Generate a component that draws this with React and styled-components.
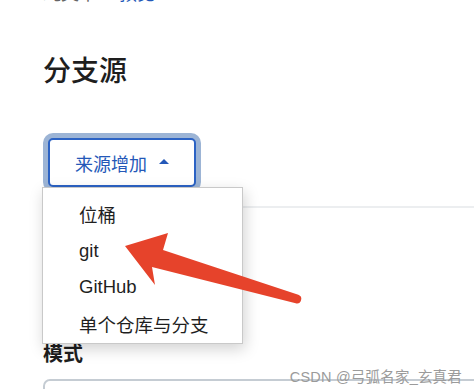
import React from "react";
import styled, { createGlobalStyle } from "styled-components";

const Global = createGlobalStyle`
  html, body { margin: 0; padding: 0; background: #fff; }
  body {
    font-family: "Liberation Sans", "Noto Sans CJK SC", sans-serif;
    color: #1f1f1f;
  }
`;

const Page = styled.div`
  position: relative;
  width: 474px;
  height: 389px;
  overflow: hidden;
  padding-left: 43px;
  box-sizing: border-box;
`;

const Meta = styled.div`
  margin-top: -16px;
  display: flex;
  gap: 22px;
  font-size: 18px;
  line-height: 20px;
`;

const MetaText = styled.span`
  color: ${(p) => (p.$link ? "#2458b8" : "#666")};
`;

const Heading = styled.h2`
  margin: 52px 0 0;
  font-size: 28px;
  line-height: 32px;
  font-weight: 500;
  color: #1e1e1e;
`;

const AddWrap = styled.div`
  position: relative;
  margin: 50px 0 0 5px;
  width: 148px;
`;

const AddButton = styled.button`
  width: 148px;
  height: 49px;
  display: flex;
  align-items: center;
  justify-content: center;
  gap: 12px;
  background: #fff;
  border: 2px solid #2b62c4;
  border-radius: 5px;
  box-shadow: 0 0 0 5px #9cb4d5;
  font-family: inherit;
  font-size: 18px;
  color: #2458b8;
  padding: 0;
`;

const Caret = styled.span`
  width: 0;
  height: 0;
  border-left: 5px solid transparent;
  border-right: 5px solid transparent;
  border-bottom: 5px solid #2458b8;
  margin-top: -2px;
`;

const Menu = styled.ul`
  position: absolute;
  top: 49px;
  left: -6px;
  width: 201px;
  height: 157px;
  box-sizing: border-box;
  margin: 0;
  padding: 8px 0 0;
  list-style: none;
  background: #fff;
  border: 1px solid #c9c9c9;
  box-shadow: 2px 5px 14px rgba(0, 0, 0, 0.18);
  z-index: 2;
`;

const MenuItem = styled.li`
  height: 36.5px;
  display: flex;
  align-items: center;
  padding-left: 36px;
  font-size: 18.5px;
  color: #1f1f1f;
`;

const Card = styled.div`
  margin-top: 19px;
  margin-right: -20px;
  border-top: 2px solid #eceef0;
  padding-top: 134px;
`;

const Label = styled.div`
  font-size: 20px;
  line-height: 24px;
  font-weight: 700;
  color: #1e1e1e;
`;

const Input = styled.div`
  margin-top: 13px;
  height: 40px;
  border: 2px solid #c5ccd3;
  border-radius: 7px;
`;

const Watermark = styled.div`
  position: absolute;
  right: 12px;
  top: 365px;
  font-size: 14.5px;
  color: #9b9b9b;
  letter-spacing: 0.2px;
  z-index: 3;
`;

const ArrowSvg = styled.svg`
  position: absolute;
  left: 0;
  top: 0;
  z-index: 4;
  pointer-events: none;
`;

const items = ["位桶", "git", "GitHub", "单个仓库与分支"];

export default function App() {
  return (
    <>
      <Global />
      <Page>
        <Meta>
          <MetaText>纯文本</MetaText>
          <MetaText $link>预览</MetaText>
        </Meta>
        <Heading>分支源</Heading>
        <AddWrap>
          <AddButton>
            来源增加
            <Caret />
          </AddButton>
          <Menu>
            {items.map((it) => (
              <MenuItem key={it}>{it}</MenuItem>
            ))}
          </Menu>
        </AddWrap>
        <Card>
          <Label>模式</Label>
          <Input />
        </Card>
        <Watermark>CSDN @弓弧名家_玄真君</Watermark>
        <ArrowSvg width="474" height="389" viewBox="0 0 474 389">
          <path
            d="M125 246 L168 233 L163 250 L298.3 294.7 A4.5 4.5 0 0 1 295.7 303.3 L152 267 L155 285 Z"
            fill="#e6432b"
          />
        </ArrowSvg>
      </Page>
    </>
  );
}
